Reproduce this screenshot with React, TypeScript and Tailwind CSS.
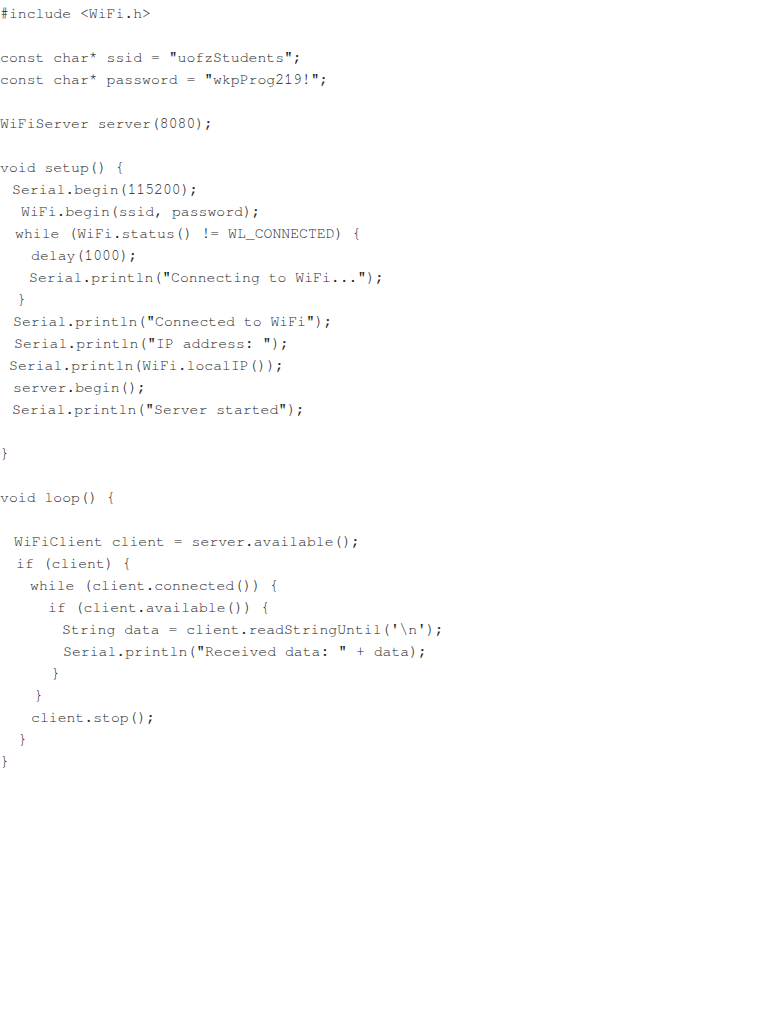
import React from "react";

type Line = { t: string; c: string };

const lines: Line[] = [
  { t: "#include <WiFi.h>", c: "pl-0" },
  { t: "", c: "pl-0" },
  { t: 'const char* ssid = "uofzStudents";', c: "pl-0" },
  { t: 'const char* password = "wkpProg219!";', c: "pl-0" },
  { t: "", c: "pl-0" },
  { t: "WiFiServer server(8080);", c: "pl-0" },
  { t: "", c: "pl-0" },
  { t: "void setup() {", c: "pl-0" },
  { t: "Serial.begin(115200);", c: "pl-[12px]" },
  { t: "WiFi.begin(ssid, password);", c: "pl-[21px]" },
  { t: "while (WiFi.status() != WL_CONNECTED) {", c: "pl-[15px]" },
  { t: "delay(1000);", c: "pl-[31px]" },
  { t: 'Serial.println("Connecting to WiFi...");', c: "pl-[29px]" },
  { t: "}", c: "pl-[17px]" },
  { t: 'Serial.println("Connected to WiFi");', c: "pl-[13px]" },
  { t: 'Serial.println("IP address: ");', c: "pl-[14px]" },
  { t: "Serial.println(WiFi.localIP());", c: "pl-[9px]" },
  { t: "server.begin();", c: "pl-[13px]" },
  { t: 'Serial.println("Server started");', c: "pl-[12px]" },
  { t: "", c: "pl-0" },
  { t: "}", c: "pl-0" },
  { t: "", c: "pl-0" },
  { t: "void loop() {", c: "pl-0" },
  { t: "", c: "pl-0" },
  { t: "WiFiClient client = server.available();", c: "pl-[14px]" },
  { t: "if (client) {", c: "pl-[16px]" },
  { t: "while (client.connected()) {", c: "pl-[30px]" },
  { t: "if (client.available()) {", c: "pl-[48px]" },
  { t: "String data = client.readStringUntil('\\n');", c: "pl-[62px]" },
  { t: 'Serial.println("Received data: " + data);', c: "pl-[63px]" },
  { t: "}", c: "pl-[51px]" },
  { t: "}", c: "pl-[34px]" },
  { t: "client.stop();", c: "pl-[31px]" },
  { t: "}", c: "pl-[18px]" },
  { t: "}", c: "pl-0" },
];

export default function App() {
  return (
    <div className="w-[768px] h-[1024px] bg-white overflow-hidden">
      <div
        className="pt-[3px] text-[14.8px] leading-[22px] text-[#262626] whitespace-pre"
        style={{
          fontFamily:
            '"Nimbus Mono PS", "Nimbus Mono L", FreeMono, "Courier New", Courier, "Liberation Mono", monospace',
        }}
      >
        {lines.map((l, i) => (
          <div key={i} className={`h-[22px] ${l.c}`}>
            {l.t}
          </div>
        ))}
      </div>
    </div>
  );
}
